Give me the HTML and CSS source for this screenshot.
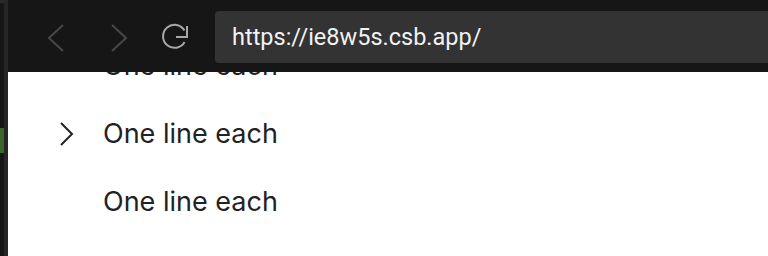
FILE: index.html
```html
<!DOCTYPE html>
<html>
<head>
<meta charset="utf-8">
<link rel="stylesheet" href="styles.css">
</head>
<body>
<div class="window">
  <div class="side">
    <div class="side-top"></div>
    <div class="side-green"></div>
  </div>
  <div class="main">
    <div class="toolbar">
      <div class="nav">
        <svg class="btn" width="64" height="72" viewBox="0 0 64 72"><path d="M55 25 L41 38 L55 51" fill="none" stroke="#484848" stroke-width="2"/></svg>
        <svg class="btn" width="64" height="72" viewBox="0 0 64 72"><path d="M40 25 L54 38 L40 51" fill="none" stroke="#484848" stroke-width="2"/></svg>
        <svg class="btn" width="64" height="72" viewBox="0 0 64 72"><path d="M48.5 30.5 A11.5 11.5 0 1 0 48.6 42" fill="none" stroke="#a8a8a8" stroke-width="2"/><path d="M40 37 H51 V26" fill="none" stroke="#a8a8a8" stroke-width="2"/></svg>
      </div>
      <div class="address">https://ie8w5s.csb.app/</div>
    </div>
    <div class="content">
      <ul class="list">
        <li class="row"><span class="chev"></span><span class="label">One line each</span></li>
        <li class="row"><span class="chev"><svg width="16" height="26" viewBox="0 0 16 26"><path d="M2 2 L13 13 L2 24" fill="none" stroke="#222" stroke-width="2"/></svg></span><span class="label">One line each</span></li>
        <li class="row"><span class="chev"></span><span class="label">One line each</span></li>
      </ul>
    </div>
  </div>
</div>
</body>
</html>
```

FILE: styles.css
```css
html, body {
  margin: 0;
  padding: 0;
  width: 768px;
  height: 256px;
  overflow: hidden;
}
.window {
  display: grid;
  grid-template-columns: 8px 1fr;
  height: 256px;
}
.side {
  background: linear-gradient(to right, #161616 0 4px, #262626 4px 8px);
  display: flex;
  flex-direction: column;
}
.side-top {
  height: 3px;
  width: 4px;
  background: #2a2a2a;
}
.side-green {
  margin-top: 125px;
  width: 4px;
  height: 25px;
  background: #3a662b;
}
.main {
  display: flex;
  flex-direction: column;
  min-width: 0;
}
.toolbar {
  height: 72px;
  background: #161616;
  display: flex;
  align-items: flex-start;
  flex-shrink: 0;
}
.nav {
  display: flex;
  width: 207px;
  flex-shrink: 0;
}
.btn {
  display: block;
}
.address {
  margin-top: 11px;
  height: 52px;
  flex: 1;
  margin-right: -10px;
  background: #333333;
  border-radius: 4px;
  color: #f2f2f2;
  font-family: Roboto, "Liberation Sans", sans-serif;
  font-size: 23.5px;
  line-height: 52px;
  padding-left: 17px;
  white-space: nowrap;
}
.content {
  flex: 1;
  background: #ffffff;
  overflow: hidden;
}
.list {
  list-style: none;
  margin: -40px 0 0 0;
  padding: 0;
}
.row {
  height: 68px;
  display: flex;
  align-items: center;
}
.chev {
  width: 95px;
  display: flex;
  justify-content: flex-start;
  padding-left: 51px;
  box-sizing: border-box;
}
.chev svg {
  display: block;
}
.label {
  font-family: Inter, "Liberation Sans", sans-serif;
  font-size: 27px;
  line-height: 68px;
  color: #222222;
}
```
